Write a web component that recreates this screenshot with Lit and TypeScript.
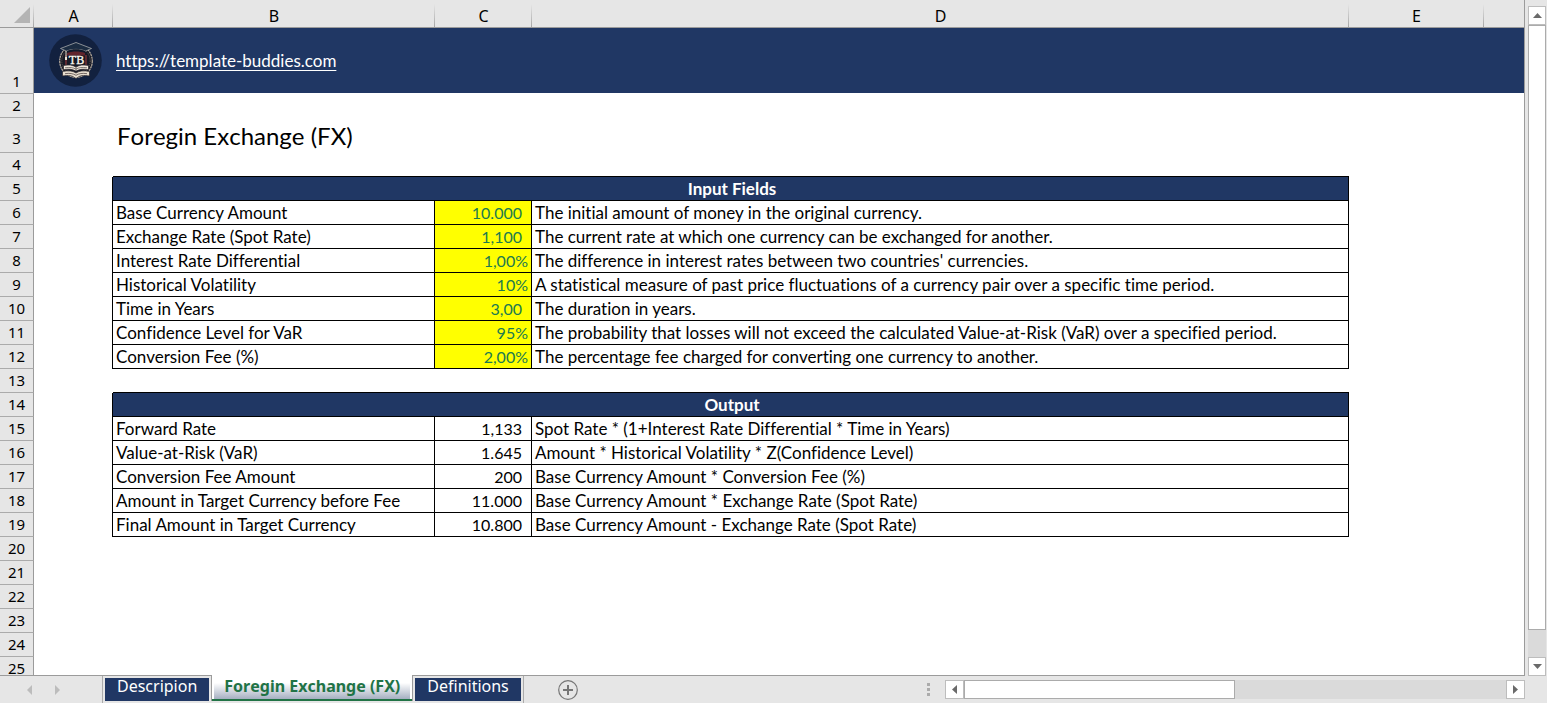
import { LitElement, html, css, svg, nothing } from "lit";
import { customElement, state } from "lit/decorators.js";
import { classMap } from "lit/directives/class-map.js";

interface Entry {
  label: string;
  value: string;
  note: string;
}

const INPUTS: Entry[] = [
  { label: "Base Currency Amount", value: "10.000", note: "The initial amount of money in the original currency." },
  { label: "Exchange Rate (Spot Rate)", value: "1,100", note: "The current rate at which one currency can be exchanged for another." },
  { label: "Interest Rate Differential", value: "1,00%", note: "The difference in interest rates between two countries' currencies." },
  { label: "Historical Volatility", value: "10%", note: "A statistical measure of past price fluctuations of a currency pair over a specific time period." },
  { label: "Time in Years", value: "3,00", note: "The duration in years." },
  { label: "Confidence Level for VaR", value: "95%", note: "The probability that losses will not exceed the calculated Value-at-Risk (VaR) over a specified period." },
  { label: "Conversion Fee (%)", value: "2,00%", note: "The percentage fee charged for converting one currency to another." },
];

const OUTPUTS: Entry[] = [
  { label: "Forward Rate", value: "1,133", note: "Spot Rate * (1+Interest Rate Differential * Time in Years)" },
  { label: "Value-at-Risk (VaR)", value: "1.645", note: "Amount * Historical Volatility * Z(Confidence Level)" },
  { label: "Conversion Fee Amount", value: "200", note: "Base Currency Amount * Conversion Fee (%)" },
  { label: "Amount in Target Currency before Fee", value: "11.000", note: "Base Currency Amount * Exchange Rate (Spot Rate)" },
  { label: "Final Amount in Target Currency", value: "10.800", note: "Base Currency Amount - Exchange Rate (Spot Rate)" },
];

@customElement("brand-logo")
export class BrandLogo extends LitElement {
  static styles = css`
    :host { display: block; width: 53px; height: 53px; }
    svg { display: block; }
  `;

  render() {
    return html`
      <svg width="53" height="53" viewBox="0 0 53 53" role="img" aria-label="Template Buddies">
        <circle cx="26.5" cy="26.5" r="26.3" fill="#12213f" />
        ${svg`
          <circle cx="27" cy="27" r="16.3" fill="#171a26" stroke="#b9aea0" stroke-width="1.2" stroke-dasharray="2.2 .5" />
          <circle cx="27" cy="27" r="14.2" fill="none" stroke="#6d625c" stroke-width=".9" stroke-dasharray="1 1" />
          <path d="M18 16.500h18v5H18z" fill="#61242c" />
          <path d="M17 21v11M37 21v11" stroke="#7d3136" stroke-width="1.4" />
          <path d="M11.500 14.500 27 8.500l15.500 6-6 2.600c-5.500-2.300-13.500-2.300-19 0z" fill="#1b2c42" stroke="#a5a7a8" stroke-width=".8" />
          <path d="M18 17c5-2.200 13-2.200 18 0v2c-5-2-13-2-18 0z" fill="#101a2c" />
          <path d="M17 17v8" stroke="#e7ddcf" stroke-width="1" />
          <path d="M16 23h2v3h-2z" fill="#eee6d9" />
          <path d="M14.500 31.500c5-1 9-.6 12.500 1.500 3.500-2.100 7.500-2.500 12.500-1.500v4.200c-5-1-9-.6-12.500 1.400-3.500-2-7.500-2.400-12.500-1.400z" fill="#f0e8dc" stroke="#27222a" stroke-width=".7" />
          <path d="M16 33.800c4.500-.8 8-.3 11 1.300 3-1.600 6.500-2.100 11-1.300M27 32.700v4" fill="none" stroke="#514a4b" stroke-width=".7" />
          <path d="M13.500 37.500c6-1.200 10-.8 13.500 1.500 3.500-2.300 7.500-2.700 13.500-1.500v4.500c-6-1.100-9.500-.4-12 1.500l-1.500 1-1.500-1c-2.500-1.900-6-2.600-12-1.500z" fill="#e8decf" stroke="#27222a" stroke-width=".7" />
          <path d="M16 39.700c4.500-.8 8-.2 11 1.600 3-1.800 6.500-2.400 11-1.600" fill="none" stroke="#655957" stroke-width=".9" />
        `}
        <text x="27.500" y="30" text-anchor="middle" font-family="Liberation Serif, serif" font-size="12" fill="#fffaf0" stroke="#fffaf0" stroke-width=".3">TB</text>
      </svg>
    `;
  }
}

@customElement("app-root")
export class AppRoot extends LitElement {
  @state() private activeTab = 1;

  private tabs = ["Descripion", "Foregin Exchange (FX)", "Definitions"];

  static styles = css`
    :host {
      display: grid;
      grid-template-columns: minmax(0, 1fr) 22px;
      grid-template-rows: minmax(0, 1fr) 27px;
      height: 100vh;
      background: #e6e6e6;
      color: #000;
      font-family: Lato, "Liberation Sans", sans-serif;
      font-size: 17px;
      font-variant-ligatures: none;
      line-height: 23px;
      overflow: hidden;
    }
    button {
      font: inherit;
      margin: 0;
      padding: 0;
      border: 0;
      background: none;
    }
    svg { display: block; }

    .sheet {
      background: #fff;
      border-right: 1px solid #9b9b9b;
      border-bottom: 1px solid #9b9b9b;
      overflow: hidden;
    }
    table {
      width: 100%;
      table-layout: fixed;
      border-collapse: separate;
      border-spacing: 0;
    }
    .col-head { width: 34px; }
    .col-a { width: 79px; }
    .col-b { width: 322px; }
    .col-c { width: 97px; }
    .col-e { width: 135px; }
    .col-f { width: 40px; }
    th, td {
      box-sizing: border-box;
      height: 24px;
      padding: 0;
      font-weight: 400;
      text-align: left;
      vertical-align: bottom;
      white-space: nowrap;
    }

    thead th {
      height: 28px;
      background: linear-gradient(#e6e6e6, #9b9b9b) right 0 top 4px / 1px 100% no-repeat #e6e6e6;
      border-bottom: 1px solid #9b9b9b;
      font-family: "Noto Sans", sans-serif;
      font-size: 16px;
      line-height: 22px;
      text-align: center;
    }
    thead th.last { background: #e6e6e6; }
    thead th.corner { padding: 0 3px 3px 0; }
    .corner svg { margin-left: auto; }
    tbody th {
      background: #e6e6e6;
      border-right: 1px solid #9b9b9b;
      border-bottom: 1px solid #ababab;
      font-family: "Noto Sans", sans-serif;
      font-size: 15px;
      text-align: center;
    }

    .banner th { height: 66px; }
    .banner td {
      background: #203764;
      border-bottom: 1px solid #fff;
      vertical-align: middle;
    }
    .banner brand-logo { margin-left: 15px; }
    .banner a {
      padding-left: 3px;
      color: #fff;
      text-decoration: underline;
      text-underline-offset: 3px;
    }
    .title th { height: 35px; padding-bottom: 2px; }
    .title td {
      padding-left: 4px;
      font-size: 24px;
      font-kerning: none;
      line-height: 32px;
      vertical-align: middle;
    }

    .edge-right { border-right: 1px solid #000; }
    .edge-bottom { border-bottom: 1px solid #000; }
    .cell {
      padding-left: 3px;
      border-right: 1px solid #000;
      border-bottom: 1px solid #000;
    }
    .heading {
      background: #203764;
      color: #fff;
      font-weight: 700;
      text-align: center;
    }
    .value {
      padding-right: 9px;
      font-size: 16px;
      text-align: right;
    }
    .percent { padding-right: 3px; }
    .editable { background: #ff0; color: #207a50; }

    .vbar {
      display: flex;
      flex-direction: column;
      padding: 6px 1px 0 3px;
    }
    .track {
      display: flex;
      flex: 1;
      background: #dadada;
    }
    .thumb {
      box-sizing: border-box;
      background: #fff;
      border: 1px solid #ababab;
    }
    .vbar .thumb { width: 100%; height: 95.7%; }
    .arrow {
      box-sizing: border-box;
      display: grid;
      place-items: center;
      flex: none;
      width: 19px;
      height: 19px;
      background: #fff;
      border: 1px solid #bdbdbd;
    }
    .vbar .arrow { width: 18px; }

    .footer {
      display: flex;
      min-width: 0;
      font-family: "Noto Sans", sans-serif;
    }
    .nav {
      display: flex;
      align-items: center;
      gap: 21px;
      box-sizing: border-box;
      width: 103px;
      padding-left: 26px;
      border-right: 1px solid #ababab;
    }
    .tabs { display: flex; padding-left: 2px; gap: 2px; }
    .tab {
      align-self: flex-start;
      height: 23px;
      margin-top: 2px;
      padding: 0 12px;
      background: #203764;
      color: #fff;
      font-size: 16px;
      font-kerning: none;
      line-height: 16px;
      white-space: nowrap;
    }
    .tab span { display: block; height: 23px; }
    .tab.active {
      height: 26px;
      margin-top: -1px;
      padding: 0 2px 1px;
      background: #fff;
      border: solid #9b9b9b;
      border-width: 0 1px;
      box-shadow: inset 0 -2px #217346;
      color: #217346;
      font-weight: 700;
      line-height: 20px;
    }
    .tab.active span {
      padding: 0 10px;
      background: linear-gradient(#fff 30%, #a5afc1);
    }
    .add {
      margin-left: 2px;
      padding-left: 34px;
      border-left: 1px solid #ababab;
    }
    .grip { margin: 7px 15px 0 auto; }
    .hbar {
      display: flex;
      flex: 0 0 580px;
      height: 19px;
      margin-top: 4px;
    }
    .hbar .thumb { width: 50%; }
  `;

  private row(n: number, cells: unknown = html`<td colspan="6"></td>`, kind = "") {
    return html`<tr class=${kind || nothing}><th scope="row">${n}</th>${cells}</tr>`;
  }

  private spacer(n: number) {
    return this.row(n, html`<td></td><td class="edge-bottom" colspan="3"></td><td colspan="2"></td>`);
  }

  private block(start: number, heading: string, entries: Entry[], editable: boolean) {
    return html`
      ${this.row(start, html`
        <td class="edge-right"></td>
        <td class="cell heading" colspan="3">${heading}</td>
        <td colspan="2"></td>`)}
      ${entries.map((e, i) => this.row(start + 1 + i, html`
        <td class="edge-right"></td>
        <td class="cell">${e.label}</td>
        <td class=${classMap({ cell: true, value: true, editable, percent: e.value.endsWith("%") })}>${e.value}</td>
        <td class="cell">${e.note}</td>
        <td colspan="2"></td>`))}
    `;
  }

  private arrow(label: string, path: string) {
    return html`
      <button class="arrow" aria-label=${label}>
        <svg width="9" height="9" viewBox="0 0 9 9"><path d=${path} fill="#6a6a6a" /></svg>
      </button>`;
  }

  render() {
    return html`
      <main class="sheet">
        <table>
          <colgroup>
            <col class="col-head" /><col class="col-a" /><col class="col-b" />
            <col class="col-c" /><col /><col class="col-e" /><col class="col-f" />
          </colgroup>
          <thead>
            <tr>
              <th class="corner">
                <svg width="17" height="17" viewBox="0 0 17 17"><path d="M16 0v16H0z" fill="#b4b4b4" /></svg>
              </th>
              ${["A", "B", "C", "D", "E"].map((c) => html`<th scope="col">${c}</th>`)}
              <th class="last"></th>
            </tr>
          </thead>
          <tbody>
            ${this.row(1, html`
              <td><brand-logo></brand-logo></td>
              <td colspan="5"><a href="https://template-buddies.com">https://template-buddies.com</a></td>`, "banner")}
            ${this.row(2)}
            ${this.row(3, html`<td></td><td colspan="5">Foregin Exchange (FX)</td>`, "title")}
            ${this.spacer(4)}
            ${this.block(5, "Input Fields", INPUTS, true)}
            ${this.spacer(13)}
            ${this.block(14, "Output", OUTPUTS, false)}
            ${[20, 21, 22, 23, 24, 25].map((n) => this.row(n))}
          </tbody>
        </table>
      </main>

      <div class="vbar">
        ${this.arrow("Scroll up", "M0 7 4.500 2 9 7z")}
        <div class="track"><div class="thumb"></div></div>
        ${this.arrow("Scroll down", "M0 2h9L4.500 7z")}
      </div>

      <footer class="footer">
        <div class="nav">
          <button aria-label="Previous sheet">
            <svg width="7" height="10" viewBox="0 0 7 10"><path d="M6 0v10L1 5z" fill="#bcbcbc" /></svg>
          </button>
          <button aria-label="Next sheet">
            <svg width="7" height="10" viewBox="0 0 7 10"><path d="M1 0v10l5-5z" fill="#bcbcbc" /></svg>
          </button>
        </div>
        <nav class="tabs" aria-label="Sheets">
          ${this.tabs.map((name, i) => html`
            <button
              class=${classMap({ tab: true, active: i === this.activeTab })}
              @click=${() => (this.activeTab = i)}
            ><span>${name}</span></button>`)}
        </nav>
        <button class="add" aria-label="New sheet">
          <svg width="20" height="20" viewBox="0 0 20 20" fill="none" stroke="#767676">
            <circle cx="10" cy="10" r="9.300" stroke-width="1.200" />
            <path d="M10 5v10M5 10h10" stroke-width="2" />
          </svg>
        </button>
        <svg class="grip" width="3" height="13" viewBox="0 0 3 13">
          <path d="M0 0h3v3H0zM0 5h3v3H0zM0 10h3v3H0z" fill="#ababab" />
        </svg>
        <div class="hbar">
          ${this.arrow("Scroll left", "M7 0v9L2 4.500z")}
          <div class="track"><div class="thumb"></div></div>
          ${this.arrow("Scroll right", "M2 0v9l5-4.500z")}
        </div>
      </footer>
    `;
  }
}
